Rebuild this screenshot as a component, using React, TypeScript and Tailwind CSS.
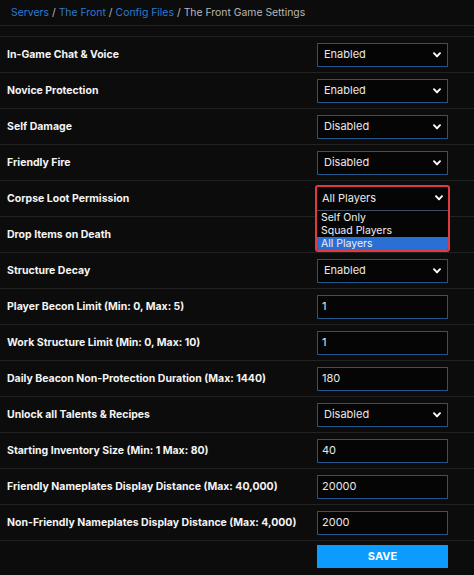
import React from 'react';

type Row = {
    label: string;
    kind: 'select' | 'input' | 'open' | 'covered';
    value: string;
};

const rows: Row[] = [
    { label: 'In-Game Chat & Voice', kind: 'select', value: 'Enabled' },
    { label: 'Novice Protection', kind: 'select', value: 'Enabled' },
    { label: 'Self Damage', kind: 'select', value: 'Disabled' },
    { label: 'Friendly Fire', kind: 'select', value: 'Disabled' },
    { label: 'Corpse Loot Permission', kind: 'open', value: 'All Players' },
    { label: 'Drop Items on Death', kind: 'covered', value: 'Enabled' },
    { label: 'Structure Decay', kind: 'select', value: 'Enabled' },
    { label: 'Player Becon Limit (Min: 0, Max: 5)', kind: 'input', value: '1' },
    { label: 'Work Structure Limit (Min: 0, Max: 10)', kind: 'input', value: '1' },
    { label: 'Daily Beacon Non-Protection Duration (Max: 1440)', kind: 'input', value: '180' },
    { label: 'Unlock all Talents & Recipes', kind: 'select', value: 'Disabled' },
    { label: 'Starting Inventory Size (Min: 1 Max: 80)', kind: 'input', value: '40' },
    { label: 'Friendly Nameplates Display Distance (Max: 40,000)', kind: 'input', value: '20000' },
    { label: 'Non-Friendly Nameplates Display Distance (Max: 4,000)', kind: 'input', value: '2000' },
];

function Chevron() {
    return (
        <svg width="8" height="6" viewBox="0 0 8 6" className="shrink-0">
            <polyline
                points="1,1.2 4,4.4 7,1.2"
                fill="none"
                stroke="#ffffff"
                strokeWidth="1.9"
                strokeLinecap="round"
                strokeLinejoin="round"
            />
        </svg>
    );
}

function Control({ row }: { row: Row }) {
    if (row.kind === 'covered') {
        // sits under the open dropdown above, nothing of it shows
        return <div className="h-[24px] w-[131px]" />;
    }
    if (row.kind === 'input') {
        return (
            <div className="flex h-[24px] w-[131px] items-center border border-[#22558a] bg-[#050505] px-[4px] text-[11px] text-[#e8e8e8]">
                {row.value}
            </div>
        );
    }
    if (row.kind === 'open') {
        return (
            <div className="relative h-[24px] w-[131px]">
                <div className="absolute -left-[2px] -top-[2px] z-10 w-[135px] overflow-hidden rounded-[3px] border-2 border-[#e0393e] bg-[#050505]">
                    <div className="flex h-[24px] items-center justify-between border-b border-[#3d4d63] pl-[5px] pr-[5px] text-[11px] text-[#ececec]">
                        <span>{row.value}</span>
                        <Chevron />
                    </div>
                    <div className="flex flex-col text-[10.5px] leading-[11px] text-[#f0f0f0]">
                        <div className="flex h-[13px] items-center pl-[4px]">Self Only</div>
                        <div className="flex h-[13px] items-center pl-[4px]">Squad Players</div>
                        <div className="flex h-[13px] items-center bg-[#2a6fd3] pl-[4px]">All Players</div>
                    </div>
                </div>
            </div>
        );
    }
    return (
        <div className="flex h-[24px] w-[131px] items-center justify-between border border-[#22558a] bg-[#050505] pl-[6px] pr-[6px] text-[11px] text-[#e8e8e8]">
            <span>{row.value}</span>
            <Chevron />
        </div>
    );
}

export default function App() {
    return (
        <div className="h-[575px] w-[474px] overflow-hidden bg-[#0c0c0c] font-['Inter',sans-serif]">
            <div className="flex h-[26px] items-center border-b border-[#222222] px-[11px] text-[10.4px] text-[#b8b8b8]">
                <span className="text-[#2b7bd0]">Servers</span>
                <span className="px-[3px]">/</span>
                <span className="text-[#2b7bd0]">The Front</span>
                <span className="px-[3px]">/</span>
                <span className="text-[#2b7bd0]">Config Files</span>
                <span className="px-[3px]">/</span>
                <span>The Front Game Settings</span>
            </div>
            <div className="h-[11px] border-b border-[#222222]" />
            {rows.map((row) => (
                <div
                    key={row.label}
                    className="flex h-[36px] items-center justify-between border-b border-[#222222] pl-[7px] pr-[26px]"
                >
                    <span className="text-[10.5px] font-bold text-[#f4f4f4]">
                        {row.label}
                    </span>
                    <Control row={row} />
                </div>
            ))}
            <div className="flex justify-end pr-[26px] pt-[4px]">
                <button className="h-[23px] w-[131px] bg-[#0c9bff] text-[11px] font-bold text-white">
                    SAVE
                </button>
            </div>
        </div>
    );
}
